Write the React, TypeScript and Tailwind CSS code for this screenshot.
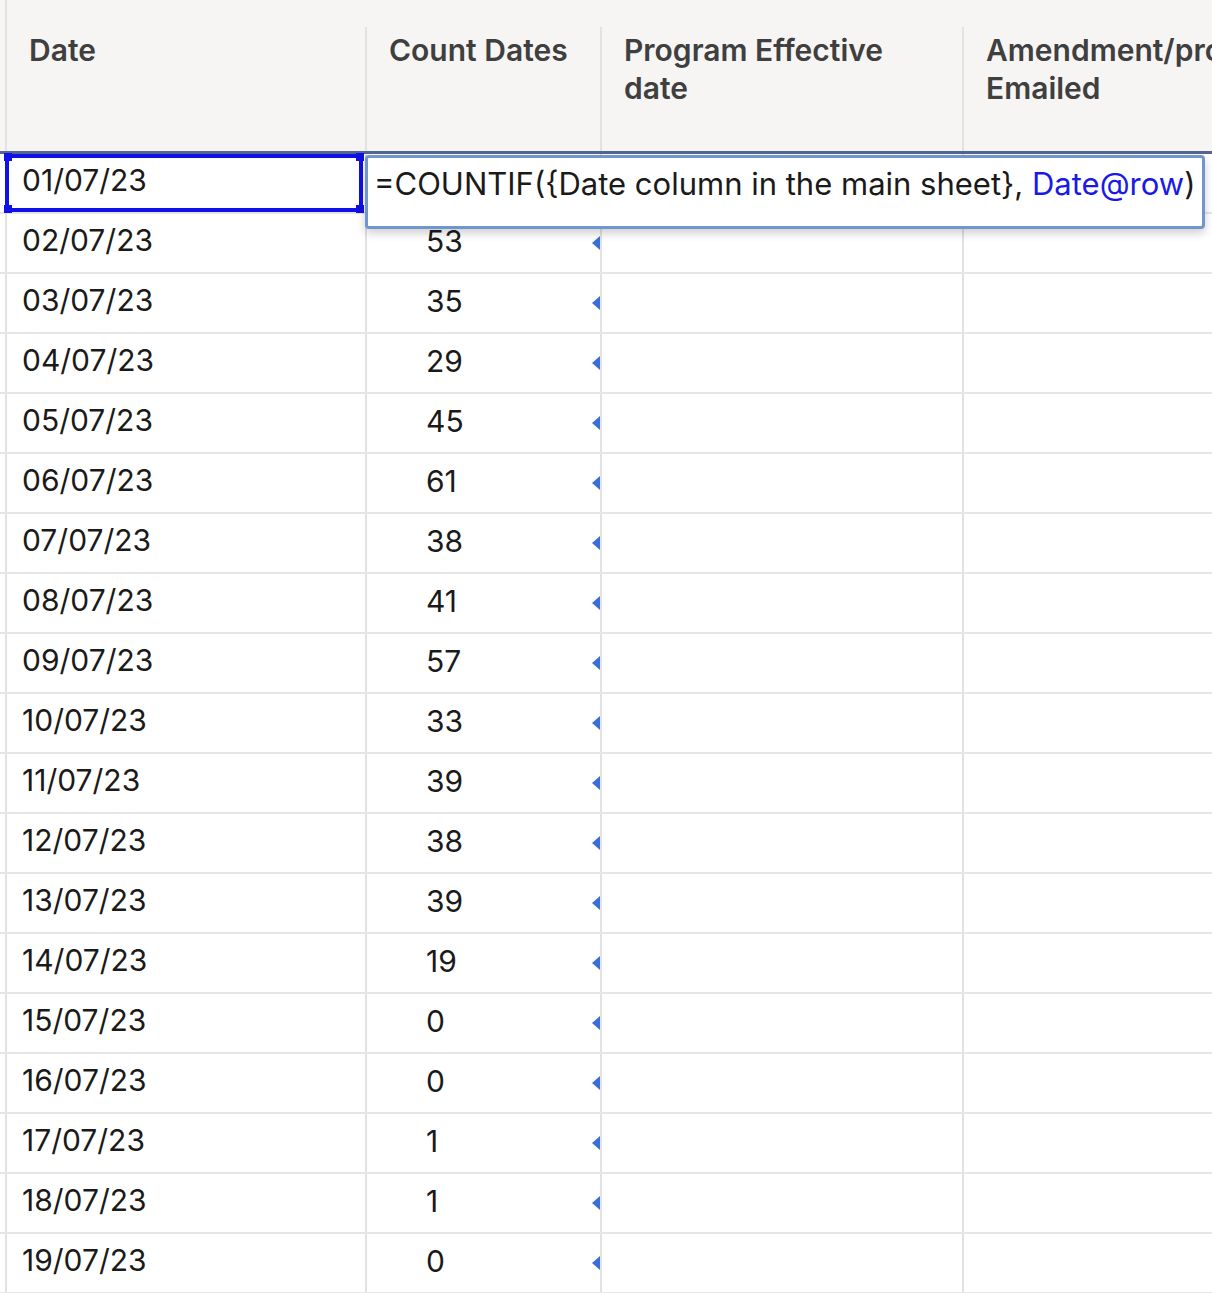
import React from 'react';

const rows: [string, string][] = [
  ['01/07/23', ''], ['02/07/23', '53'], ['03/07/23', '35'], ['04/07/23', '29'], ['05/07/23', '45'],
  ['06/07/23', '61'], ['07/07/23', '38'], ['08/07/23', '41'], ['09/07/23', '57'], ['10/07/23', '33'],
  ['11/07/23', '39'], ['12/07/23', '38'], ['13/07/23', '39'], ['14/07/23', '19'], ['15/07/23', '0'],
  ['16/07/23', '0'], ['17/07/23', '1'], ['18/07/23', '1'], ['19/07/23', '0'],
];

const Tri = () => (
  <svg width="10" height="16" viewBox="0 0 10 16" className="absolute right-0 top-1/2 -translate-y-1/2">
    <path d="M10 1 L2 8 L10 15 Z" fill="#3b6fd8" />
  </svg>
);

export default function App() {
  return (
    <div className="relative w-[1212px] h-[1293px] overflow-hidden bg-white text-[#1a1a1a]" style={{ fontFamily: 'Inter, "Noto Sans", sans-serif' }}>
      {/* header */}
      <div className="flex h-[151px] bg-[#f6f5f4] text-[30px] font-semibold text-[#3f3f3f] leading-[38px]">
        <div className="w-[5px] shrink-0" />
        <div className="w-[360px] shrink-0 border-l-2 border-[#e2e2e2] px-[22px] pt-[31px] h-full">Date</div>
        <div className="w-[235px] shrink-0 flex flex-col">
          <div className="h-[27px]" />
          <div className="flex-1 border-l-2 border-[#e2e2e2] px-[22px] pt-[4px] whitespace-nowrap">Count Dates</div>
        </div>
        <div className="w-[362px] shrink-0 flex flex-col">
          <div className="h-[27px]" />
          <div className="flex-1 border-l-2 border-[#e2e2e2] px-[22px] pt-[4px]">Program Effective date</div>
        </div>
        <div className="flex-1 min-w-0 flex flex-col whitespace-nowrap overflow-hidden">
          <div className="h-[27px]" />
          <div className="flex-1 border-l-2 border-[#e2e2e2] px-[22px] pt-[4px]">Amendment/program<br />Emailed</div>
        </div>
      </div>
      <div className="h-[3px] bg-[#55658f]" />
      {/* body */}
      {rows.map(([d, c], i) => (
        <div key={d} className="flex h-[60px] border-b-2 border-[#e6e6e6] text-[30px] leading-[40px]">
          <div className="w-[5px] shrink-0" />
          <div className={`w-[360px] shrink-0 border-l-2 border-[#e2e2e2] pl-[15px] pt-[6px] ${i === 0 ? 'relative' : ''}`}>
            {d}
            {i === 0 && (
              <div className="absolute -left-[2px] top-0 w-[358px] h-[58px] border-[4px] border-[#1010e8]">
                <div className="absolute -left-[5px] -top-[5px] w-[8px] h-[8px] bg-[#1010e8]" />
                <div className="absolute -right-[5px] -top-[5px] w-[8px] h-[8px] bg-[#1010e8]" />
                <div className="absolute -left-[5px] -bottom-[5px] w-[8px] h-[8px] bg-[#1010e8]" />
                <div className="absolute -right-[5px] -bottom-[5px] w-[8px] h-[8px] bg-[#1010e8]" />
              </div>
            )}
          </div>
          <div className="relative w-[235px] shrink-0 border-l-2 border-[#e2e2e2] pl-[59px] pt-[7px]">
            {c}
            {i > 0 && <Tri />}
          </div>
          <div className="w-[362px] shrink-0 border-l-2 border-[#e2e2e2]" />
          <div className="flex-1 border-l-2 border-[#e2e2e2]" />
        </div>
      ))}
      {/* formula editor */}
      <div className="absolute left-[365px] top-[155px] w-[840px] h-[74px] bg-white border-[3px] border-[#6f96d1] rounded-[4px] shadow-[0_4px_10px_rgba(0,0,0,0.2)] px-[6px] pt-[6px] text-[31px] leading-[40px] whitespace-nowrap">
        =COUNTIF({'{'}Date column in the main sheet{'}'}, <span className="text-[#1a1ae6]">Date@row</span>)
      </div>
    </div>
  );
}
